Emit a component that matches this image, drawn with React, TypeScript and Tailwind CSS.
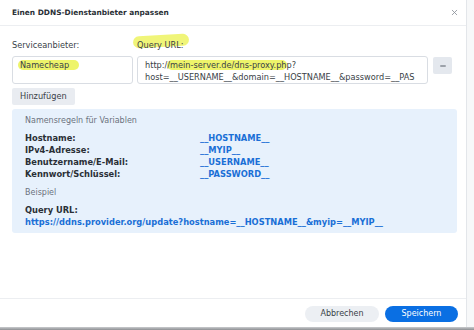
import { X, Minus } from "lucide-react";

const rules = [
  { label: "Hostname:", value: "__HOSTNAME__" },
  { label: "IPv4-Adresse:", value: "__MYIP__" },
  { label: "Benutzername/E-Mail:", value: "__USERNAME__" },
  { label: "Kennwort/Schlüssel:", value: "__PASSWORD__" },
];

export default function App() {
  return (
    <div className="w-[474px] h-[330px] bg-white overflow-hidden flex flex-col font-['DejaVu_Sans',Verdana,sans-serif] text-[#303640]">
      <div className="flex flex-1 min-h-0">
        {/* Dialog */}
        <div className="w-[467px] border-r border-[#e3e6ea] flex flex-col">
          {/* Header */}
          <div className="h-[26px] shrink-0 flex items-center justify-between pl-3 pr-[7px] border-b border-[#eceef1]">
            <span className="text-[7.4px] font-bold text-[#2a2f36] pt-[1px]">
              Einen DDNS-Dienstanbieter anpassen
            </span>
            <X className="w-[9px] h-[9px] text-[#8a9099]" strokeWidth={2.2} />
          </div>

          {/* Body */}
          <div className="flex-1 px-3 pt-[13px]">
            <div className="grid grid-cols-[121px_291px] gap-x-[4px] text-[8.2px] text-[#3a3f47] h-[13px] items-center">
              <span>Serviceanbieter:</span>
              <span className="relative">
                <span className="absolute left-[-4px] top-[-4px] w-[56px] h-[12px] bg-[#eef46a] rounded-full -rotate-3 opacity-90" />
                <span className="relative">Query URL:</span>
              </span>
            </div>

            <div className="mt-[4px] flex items-start">
              <div className="w-[121px] h-[28px] border border-[#d9dde3] rounded-[3px] px-[7px] pt-[2px] text-[8.2px] leading-[12px] text-[#3a3f47]">
                <span className="bg-[#eef46a] rounded-full px-[2px] -mx-[2px]">Namecheap&nbsp;&nbsp;&nbsp;</span>
              </div>
              <div className="ml-[4px] w-[291px] h-[28px] border border-[#d9dde3] rounded-[3px] px-[7px] pt-[2px] text-[8.2px] leading-[12px] text-[#3a3f47] whitespace-nowrap overflow-hidden">
                <div>
                  http:/<span className="bg-[#eef46a] rounded-full">/mein-server.de/dns-proxy.ph</span>p?
                </div>
                <div>host=__USERNAME__&amp;domain=__HOSTNAME__&amp;password=__PAS</div>
              </div>
              <button className="ml-[5px] mt-[1px] w-[19px] h-[17px] bg-[#e4e8ee] rounded-[2px] flex items-center justify-center">
                <Minus className="w-[8px] h-[8px] text-[#4a515b]" strokeWidth={2.8} />
              </button>
            </div>

            <button className="mt-[4px] h-[17px] px-[8px] bg-[#e9ecf1] rounded-[2px] text-[8.2px] text-[#3a3f47] flex items-center">
              Hinzufügen
            </button>

            {/* Info box */}
            <div className="mt-[4px] w-[445px] h-[124px] bg-[#e7f1fc] rounded-[3px] pl-[13px] pt-[6px] text-[8.3px]">
              <div className="text-[8px] text-[#6b727c] h-[12px] flex items-center">
                Namensregeln für Variablen
              </div>
              <div className="mt-[5px] flex flex-col">
                {rules.map((r) => (
                  <div key={r.label} className="flex h-[12px] items-center font-bold">
                    <span className="w-[175px] text-[#2a2f36]">{r.label}</span>
                    <span className="text-[#1a6fd6]">{r.value}</span>
                  </div>
                ))}
              </div>
              <div className="mt-[7px] text-[8px] text-[#6b727c] h-[12px] flex items-center">
                Beispiel
              </div>
              <div className="mt-[5px] font-bold text-[#2a2f36] h-[12px] flex items-center">
                Query URL:
              </div>
              <div className="font-bold text-[#1a6fd6] h-[12px] flex items-center">
                https://ddns.provider.org/update?hostname=__HOSTNAME__&amp;myip=__MYIP__
              </div>
            </div>
          </div>

          {/* Footer */}
          <div className="h-[29px] shrink-0 border-t border-[#eceef1] flex items-start justify-end gap-[6px] pr-[8px] pt-[7px]">
            <button className="w-[74px] h-[16px] rounded-full bg-[#eceff3] text-[8px] text-[#3a3f47]">
              Abbrechen
            </button>
            <button className="w-[73px] h-[16px] rounded-full bg-[#0a6fe3] text-[8px] text-white">
              Speichern
            </button>
          </div>
        </div>
        <div className="flex-1 bg-[#f7f8f9]" />
      </div>
      <div className="h-[3px] shrink-0 bg-gradient-to-b from-[#c9cbce] to-[#8d8f92]" />
    </div>
  );
}
